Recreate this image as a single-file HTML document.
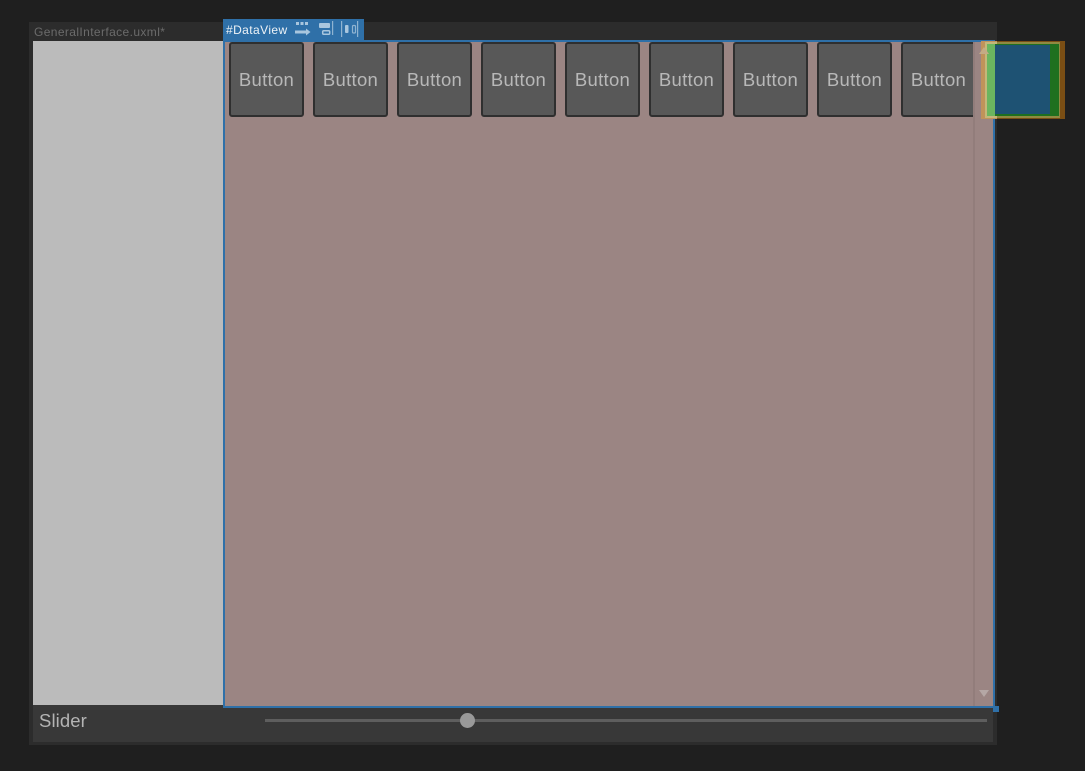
<!DOCTYPE html>
<html>
<head>
<meta charset="utf-8">
<style>
html,body{margin:0;padding:0;background:#1f1f1f;width:1085px;height:771px;overflow:hidden}
body{position:relative;font-family:"Liberation Sans",sans-serif}
.a{position:absolute}
.btn{position:absolute;top:42px;width:71px;height:71px;background:#585858;border:2px solid #2f2f2f;border-radius:3px;color:#b8b8b8;font-size:18.5px;letter-spacing:.3px;line-height:71px;text-align:center}
</style>
</head>
<body>
<div class="a" style="left:29px;top:22px;width:968px;height:723px;background:#2c2c2c"></div>
<div class="a" style="left:34px;top:24px;font-size:12px;line-height:17px;color:#6b6b6b;letter-spacing:.39px">GeneralInterface.uxml*</div>
<div class="a" style="left:33px;top:41px;width:190px;height:664px;background:#bbbbbb"></div>
<div class="a" style="left:33px;top:705px;width:960px;height:37px;background:#383838"></div>
<div class="a" style="left:225px;top:42px;width:768px;height:664px;background:#9b8583"></div>

<div class="btn" style="left:229px">Button</div>
<div class="btn" style="left:313px">Button</div>
<div class="btn" style="left:397px">Button</div>
<div class="btn" style="left:481px">Button</div>
<div class="btn" style="left:565px">Button</div>
<div class="btn" style="left:649px">Button</div>
<div class="btn" style="left:733px">Button</div>
<div class="btn" style="left:817px">Button</div>
<div class="a" style="left:901px;top:42px;width:72px;height:75px;overflow:hidden">
  <div class="btn" style="left:0;top:0">Button</div>
</div>
<div class="a" style="left:973px;top:42px;width:2px;height:664px;background:#927d7b"></div>

<svg class="a" style="left:978px;top:689px" width="12" height="9"><path d="M1 1H11L6 8Z" fill="#b5a7a5"/></svg>

<div class="a" style="left:223px;top:40px;width:2px;height:668px;background:#2f70a8"></div>
<div class="a" style="left:223px;top:40px;width:772px;height:2px;background:#2f70a8"></div>
<div class="a" style="left:993px;top:40px;width:2px;height:668px;background:#2f70a8"></div>
<div class="a" style="left:223px;top:706px;width:772px;height:2px;background:#2f70a8"></div>
<div class="a" style="left:993px;top:706px;width:6px;height:6px;background:#2f70a8"></div>

<div class="a" style="left:223px;top:19px;width:141px;height:21px;background:#2f70a8"></div>
<div class="a" style="left:226px;top:22px;font-size:12px;line-height:17px;color:#eef3f7;letter-spacing:.42px">#DataView</div>
<svg class="a" style="left:290px;top:19px" width="74" height="21">
  <g fill="#a9c6de">
    <rect x="6" y="3" width="3" height="3"/><rect x="10.500" y="3" width="3" height="3"/><rect x="15" y="3" width="3" height="3"/>
    <path d="M5 11.500H16V9.500L20.500 13L16 16.500V14.500H5Z"/>
    <rect x="29" y="4" width="11" height="5" rx="1"/>
    <rect x="42" y="2" width="1.200" height="14" fill="#8fb3d1"/>
    <rect x="51" y="2" width="1.200" height="16" fill="#8fb3d1"/>
    <rect x="55" y="6" width="3.500" height="8" rx="1"/>
    <rect x="67" y="2" width="1.200" height="16" fill="#8fb3d1"/>
  </g>
  <rect x="32.700" y="11.700" width="7" height="3.600" rx="1" fill="none" stroke="#a9c6de" stroke-width="1.500"/>
  <rect x="62.500" y="6.500" width="3" height="7.500" rx="1" fill="none" stroke="#8fb3d1" stroke-width="1.200"/>
</svg>

<div class="a" style="left:39px;top:710px;font-size:18.5px;line-height:22px;color:#b4b4b4;letter-spacing:.1px">Slider</div>
<div class="a" style="left:265px;top:719px;width:722px;height:3px;background:#5e5e5e"></div>
<div class="a" style="left:460px;top:713px;width:15px;height:15px;border-radius:50%;background:#999999"></div>

<!-- highlight overlay -->
<div class="a" style="left:997px;top:41px;width:68px;height:78px;background:#7a4e14"></div>
<div class="a" style="left:981px;top:41px;width:16px;height:78px;background:#c0935a"></div>
<div class="a" style="left:985px;top:42px;width:12px;height:76px;background:#c4b77a"></div>
<div class="a" style="left:997px;top:42px;width:63px;height:76px;background:#8f8a42"></div>
<div class="a" style="left:987px;top:44px;width:8px;height:72px;background:#6bb55f"></div>
<div class="a" style="left:995px;top:44px;width:64px;height:72px;background:#1f701f"></div>
<div class="a" style="left:995px;top:45px;width:55px;height:69px;background:#1e5273"></div>
<svg class="a" style="left:978px;top:46px" width="12" height="9"><path d="M1 8H11L6 1Z" fill="#c4ab85"/></svg>
</body>
</html>
